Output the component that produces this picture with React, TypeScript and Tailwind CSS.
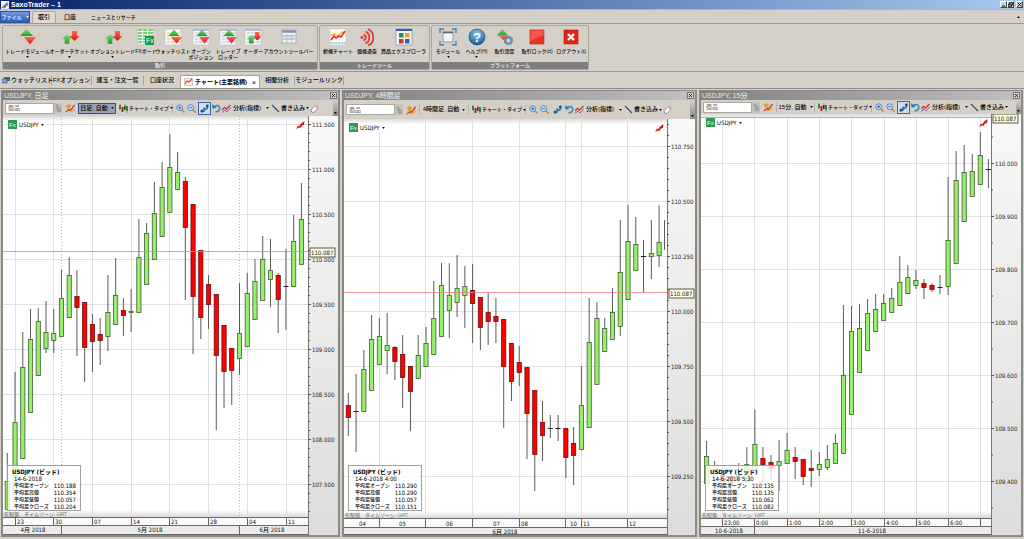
import React from "react";

type Candle = [high: number, top: number, bottom: number, low: number, kind: "up" | "down" | "flat"];

interface ChartData {
  id: string;
  title: string;
  interval: string;
  intervalActive?: boolean;
  linked?: boolean;
  eraser?: boolean;
  intervalWidth: string;
  toolbarHeight: string;
  date: string;
  legend: [string, string][];
  // plot geometry, in chart units
  left: number;
  top: number;
  width: number;
  axisX: number;
  baseY: number;
  rowY: number;
  priceY: number;
  gridX: number[];
  dotted: number[];
  majors: [number, string][];
  minorStep: number;
  ticks: [number, string][];
  periods: [number, string][];
  periodLines: number[];
  firstX: number;
  step: number;
  candles: Candle[];
}

const BOTTOM = 535;

const daily: ChartData = {
  id: "daily",
  title: "USDJPY, 日足",
  interval: "日足, 自動",
  intervalActive: true,
  linked: true,
  eraser: true,
  intervalWidth: "w-[38px]",
  toolbarHeight: "h-[16px]",
  date: "14-6-2018",
  legend: [
    ["平均足オープン", "110.188"],
    ["平均足高値", "110.354"],
    ["平均足低値", "110.057"],
    ["平均足クローズ", "110.204"],
  ],
  left: 3,
  top: 116,
  width: 335,
  axisX: 308,
  baseY: 517,
  rowY: 525,
  priceY: 251,
  gridX: [15, 53, 92, 131, 169, 208, 247, 286],
  dotted: [61, 239],
  majors: [
    [124, "111.500"],
    [169, "111.000"],
    [214, "110.500"],
    [259, "110.000"],
    [304, "109.500"],
    [349, "109.000"],
    [394, "108.500"],
    [439, "108.000"],
    [484, "107.500"],
  ],
  minorStep: 9,
  ticks: [
    [17, "23"],
    [55, "30"],
    [94, "07"],
    [133, "14"],
    [171, "21"],
    [210, "28"],
    [249, "04"],
    [288, "11"],
  ],
  periods: [
    [33, "4月 2018"],
    [150, "5月 2018"],
    [272, "6月 2018"],
  ],
  periodLines: [61, 239],
  firstX: 7.3,
  step: 7.74,
  candles: [
    [453, 481, 510, 510, "up"],
    [372, 422, 495, 495, "up"],
    [332, 367, 459, 459, "up"],
    [309, 339, 413, 413, "up"],
    [308, 321, 376, 376, "up"],
    [301, 332, 349, 353, "up"],
    [309, 333, 341, 353, "up"],
    [270, 298, 337, 337, "up"],
    [257, 275, 318, 318, "up"],
    [270, 296, 308, 356, "down"],
    [302, 302, 348, 382, "down"],
    [314, 324, 342, 372, "down"],
    [318, 334, 341, 365, "down"],
    [275, 312, 337, 351, "up"],
    [258, 295, 325, 325, "up"],
    [298, 310, 316, 336, "down"],
    [289, 311, 313, 332, "up"],
    [219, 257, 313, 313, "up"],
    [223, 233, 285, 285, "up"],
    [182, 213, 260, 260, "up"],
    [162, 187, 237, 237, "up"],
    [134, 167, 213, 213, "up"],
    [152, 172, 190, 190, "up"],
    [177, 181, 228, 300, "down"],
    [204, 204, 297, 354, "down"],
    [250, 250, 318, 339, "down"],
    [275, 284, 305, 329, "down"],
    [294, 294, 356, 430, "down"],
    [325, 325, 372, 408, "down"],
    [348, 348, 371, 405, "down"],
    [283, 333, 359, 375, "up"],
    [273, 293, 347, 347, "up"],
    [259, 281, 320, 320, "up"],
    [236, 259, 301, 301, "up"],
    [239, 270, 280, 307, "up"],
    [273, 275, 300, 333, "down"],
    [249, 286, 287, 330, "flat"],
    [215, 241, 287, 287, "up"],
    [183, 219, 265, 265, "up"],
  ],
};

const fourHour: ChartData = {
  id: "four-hour",
  title: "USDJPY, 4時間足",
  interval: "4時間足, 自動",
  eraser: true,
  intervalWidth: "w-[50px]",
  toolbarHeight: "h-[19px]",
  date: "14-6-2018 4:00",
  legend: [
    ["平均足オープン", "110.290"],
    ["平均足高値", "110.290"],
    ["平均足低値", "110.057"],
    ["平均足クローズ", "110.151"],
  ],
  left: 344,
  top: 119,
  width: 351,
  axisX: 667,
  baseY: 518,
  rowY: 527,
  priceY: 292,
  gridX: [379, 425, 472, 519, 565, 581, 627],
  dotted: [],
  majors: [
    [146, "110.750"],
    [201, "110.500"],
    [256, "110.250"],
    [311, "110.000"],
    [366, "109.750"],
    [421, "109.500"],
    [476, "109.250"],
  ],
  minorStep: 11,
  ticks: [
    [359, "04"],
    [399, "05"],
    [446, "06"],
    [493, "07"],
    [521, "08"],
    [570, "10"],
    [583, "11"],
    [629, "12"],
  ],
  periods: [[505, "6月 2018"]],
  periodLines: [],
  firstX: 348.3,
  step: 7.77,
  candles: [
    [393, 405, 418, 436, "down"],
    [374, 411, 412, 452, "flat"],
    [350, 369, 412, 412, "up"],
    [315, 339, 391, 391, "up"],
    [318, 336, 365, 365, "up"],
    [313, 345, 351, 374, "up"],
    [346, 347, 362, 380, "down"],
    [335, 354, 378, 408, "down"],
    [366, 366, 392, 431, "down"],
    [335, 355, 379, 379, "up"],
    [327, 343, 367, 367, "up"],
    [281, 318, 355, 355, "up"],
    [263, 285, 337, 337, "up"],
    [263, 295, 311, 338, "up"],
    [255, 288, 303, 317, "up"],
    [266, 286, 296, 328, "up"],
    [264, 290, 304, 343, "down"],
    [297, 297, 328, 350, "down"],
    [293, 312, 322, 345, "down"],
    [298, 316, 322, 343, "down"],
    [319, 319, 367, 428, "down"],
    [343, 343, 382, 401, "down"],
    [346, 362, 373, 386, "down"],
    [367, 367, 414, 459, "down"],
    [390, 390, 455, 491, "down"],
    [401, 422, 436, 461, "down"],
    [415, 428, 429, 438, "flat"],
    [415, 428, 429, 441, "flat"],
    [428, 428, 458, 478, "down"],
    [427, 443, 456, 485, "down"],
    [366, 405, 450, 450, "up"],
    [298, 342, 428, 428, "up"],
    [302, 318, 385, 385, "up"],
    [318, 328, 352, 352, "up"],
    [288, 312, 340, 340, "up"],
    [220, 272, 327, 336, "up"],
    [205, 241, 300, 300, "up"],
    [217, 244, 271, 271, "up"],
    [240, 256, 257, 292, "flat"],
    [220, 253, 257, 279, "up"],
    [205, 242, 256, 267, "up"],
  ],
};

const quarter: ChartData = {
  id: "quarter",
  title: "USDJPY, 15分",
  interval: "15分, 自動",
  linked: true,
  intervalWidth: "w-[39px]",
  toolbarHeight: "h-[14px]",
  date: "14-6-2018 5:30",
  legend: [
    ["平均足オープン", "110.135"],
    ["平均足高値", "110.135"],
    ["平均足低値", "110.062"],
    ["平均足クローズ", "110.082"],
  ],
  left: 701,
  top: 114,
  width: 320,
  axisX: 991,
  baseY: 518,
  rowY: 526,
  priceY: 117,
  gridX: [722, 754, 787, 819, 851, 884, 916, 948, 980],
  dotted: [],
  majors: [
    [163, "110.000"],
    [216, "109.900"],
    [269, "109.800"],
    [322, "109.700"],
    [375, "109.600"],
    [428, "109.500"],
    [481, "109.400"],
  ],
  minorStep: 26.5,
  ticks: [
    [724, "23:00"],
    [756, "0:00"],
    [789, "1:00"],
    [821, "2:00"],
    [853, "3:00"],
    [886, "4:00"],
    [918, "5:00"],
    [950, "6:00"],
  ],
  periods: [
    [729, "10-6-2018"],
    [872, "11-6-2018"],
  ],
  periodLines: [754],
  firstX: 706.6,
  step: 8.05,
  candles: [
    [441, 456, 484, 484, "up"],
    [461, 480, 481, 494, "flat"],
    [466, 473, 482, 494, "down"],
    [470, 476, 487, 494, "down"],
    [463, 475, 480, 490, "up"],
    [447, 464, 482, 484, "up"],
    [410, 444, 472, 472, "up"],
    [447, 458, 465, 486, "down"],
    [455, 462, 469, 480, "down"],
    [440, 461, 466, 491, "up"],
    [433, 450, 464, 464, "up"],
    [447, 457, 462, 479, "down"],
    [459, 459, 477, 485, "down"],
    [450, 468, 471, 487, "down"],
    [452, 464, 470, 476, "up"],
    [445, 459, 468, 470, "up"],
    [434, 443, 464, 464, "up"],
    [305, 375, 454, 454, "up"],
    [306, 331, 415, 415, "up"],
    [304, 328, 373, 373, "up"],
    [299, 313, 351, 351, "up"],
    [294, 309, 332, 332, "up"],
    [294, 303, 321, 321, "up"],
    [288, 298, 313, 313, "up"],
    [256, 282, 306, 306, "up"],
    [265, 277, 294, 294, "up"],
    [270, 280, 286, 289, "up"],
    [279, 283, 288, 299, "down"],
    [283, 285, 290, 292, "down"],
    [275, 287, 288, 294, "flat"],
    [177, 240, 287, 295, "up"],
    [151, 180, 264, 264, "up"],
    [145, 172, 222, 222, "up"],
    [154, 171, 197, 197, "up"],
    [132, 155, 185, 185, "up"],
    [159, 169, 170, 188, "flat"],
  ],
};

function Caret({ className = "" }: { className?: string }) {
  return (
    <svg viewBox="0 0 4 3" className={`w-[3px] h-[2px] shrink-0 ${className}`}>
      <path d="M0 0h4L2 3z" fill="currentColor" />
    </svg>
  );
}

const UP = "M5 0l5 5H7.500v5h-5V5H0z";
const DOWN = "M5 10L0 5h2.500V0h5v5H10z";

function RibbonIcon({ name }: { name: string }) {
  return (
    <svg viewBox="0 0 18 18" className="w-[18px] h-[18px] shrink-0">
      <defs>
        <linearGradient id={`g-${name}`} x1="0" y1="0" x2="0" y2="1">
          <stop offset="0" stopColor="#7fdc76" />
          <stop offset="1" stopColor="#1f9c2a" />
        </linearGradient>
        <linearGradient id={`r-${name}`} x1="0" y1="0" x2="0" y2="1">
          <stop offset="0" stopColor="#fb6a55" />
          <stop offset="1" stopColor="#d9150f" />
        </linearGradient>
        <radialGradient id={`b-${name}`} cx="0.5" cy="0.3" r="0.7">
          <stop offset="0" stopColor="#8fcdf0" />
          <stop offset="1" stopColor="#175b94" />
        </radialGradient>
      </defs>
      {name === "trade" && (
        <>
          <path d="M7.500 1l6.500 7H1z" fill={`url(#g-${name})`} />
          <path d="M5 9h12l-6 7.500z" fill={`url(#r-${name})`} />
        </>
      )}
      {name === "ticket" && (
        <>
          <path d={DOWN} transform="translate(8.500 3)" fill={`url(#r-${name})`} />
          <path d={UP} transform="translate(1 6)" fill={`url(#g-${name})`} stroke="#d4d0c8" strokeWidth=".4" />
        </>
      )}
      {name === "fx" && (
        <>
          <rect x="1" y="1" width="15" height="15" fill="#eafbe8" />
          {[2, 5, 8, 11, 14].map((y) => (
            <path key={y} d={`M1 ${y}h4M6 ${y}h4M11 ${y}h5`} stroke="#57c552" strokeWidth="1.500" />
          ))}
          <rect x="8" y="8" width="9" height="9" rx="1" fill="#129a43" />
          <text x="9" y="15" fontSize="7" fontFamily="Liberation Sans" fill="#fff">Fx</text>
        </>
      )}
      {(name === "watch" || name === "position" || name === "blotter" || name === "order") && (
        <>
          <rect x="1" y="1" width="16" height="16" fill="#f6f6f8" stroke="#b9bdc6" strokeWidth=".6" />
          {name !== "watch" && <path d="M1 2h16" stroke="#9fb0cf" strokeWidth="1.500" />}
          {[5, 8, 11, 14].map((y) => (
            <path key={y} d={`M3 ${y}h3M7 ${y}h4M12 ${y}h4`} stroke={name === "watch" ? "#f3c53d" : "#b4b8c2"} strokeWidth="1" />
          ))}
          {name === "order" ? (
            <>
              <path d={DOWN} transform="translate(9 4) scale(.85)" fill={`url(#r-${name})`} />
              <path d={UP} transform="translate(3 7) scale(.85)" fill={`url(#g-${name})`} />
            </>
          ) : (
            <>
              <path d="M10 1.500l5.500 6.500h-11z" fill={`url(#g-${name})`} />
              <path d="M7 9h11l-5.500 6.500z" fill={`url(#r-${name})`} />
            </>
          )}
        </>
      )}
      {name === "account" && (
        <>
          <rect x="2" y="2" width="14" height="13" fill="#eef0f4" stroke="#a3a9b5" strokeWidth=".8" />
          <path d="M2 3.500h14" stroke="#8193b3" strokeWidth="2.500" />
          <path d="M3 8h12M3 11h12" stroke="#b7bfcc" strokeWidth="1.500" />
          <path d="M7 6v9M11.500 6v9" stroke="#b7bfcc" strokeWidth=".8" />
        </>
      )}
      {name === "chart" && (
        <>
          <rect x="1" y="1" width="16" height="16" fill="#fbfbfc" stroke="#c7c9ce" strokeWidth=".6" />
          <path d="M1 15h16" stroke="#b9c4d9" strokeWidth="2" strokeDasharray="2 .7" />
          <path d="M2 7l4-1 3 2 4-4 3 1" fill="none" stroke="#f4b12b" strokeWidth="1.300" />
          <path d="M2 12l3-4 2 2 3-2 2 1 4-6" fill="none" stroke="#e2301c" strokeWidth="1.700" />
        </>
      )}
      {name === "alert" && (
        <g fill="none" stroke="#e2392b" strokeWidth="1.800">
          <circle cx="4" cy="9.500" r="1.400" fill="#e2392b" stroke="none" />
          <path d="M5.500 6.500c3 1 3 5 0 6M7.500 3.500c5 2 5 10 0 12M10 1c7 3 7 14 0 16.500" />
        </g>
      )}
      {name === "explorer" && (
        <>
          <rect x="1" y="1" width="16" height="16" fill="#f4f4f6" stroke="#8c97ad" strokeWidth=".8" />
          <path d="M1 2h16" stroke="#3a5ca0" strokeWidth="2" />
          <path d="M4 5h4.500v4.500H4z" fill="#1f9a3e" />
          <path d="M10 5h4.500v4.500H10z" fill="#f0a020" />
          <path d="M4 11h4.500v4.500H4z" fill="#d2372b" />
          <path d="M10 11h4.500v4.500H10z" fill="#3a5ca0" />
        </>
      )}
      {name === "module" && (
        <>
          <rect x="4" y="4" width="10" height="10" fill="#f2f3f5" stroke="#7e8897" strokeWidth=".8" />
          <path d="M4 4.500h10" stroke="#55657f" strokeWidth="1.500" />
          <path d="M1 5V1h4M13 1h4v4M17 13v4h-4M5 17H1v-4" fill="none" stroke="#3b86b9" strokeWidth="1.400" />
        </>
      )}
      {name === "help" && (
        <>
          <circle cx="9" cy="9" r="8" fill={`url(#b-${name})`} stroke="#17476f" strokeWidth=".6" />
          <text x="9" y="14" fontSize="13" fontWeight="700" textAnchor="middle" fontFamily="Liberation Sans" fill="#fff">?</text>
        </>
      )}
      {name === "settings" && (
        <>
          <path d="M6.500 1l5.500 6.500H1z" fill={`url(#g-${name})`} />
          <path d="M3 8h10l-3.500 6z" fill={`url(#r-${name})`} />
          <circle cx="12.500" cy="12.500" r="3" fill="#c9d6e2" stroke="#6d8aa5" strokeWidth="2" />
          <circle cx="12.500" cy="12.500" r="4.300" fill="none" stroke="#6d8aa5" strokeWidth="1.200" strokeDasharray="1.700 1.700" />
        </>
      )}
      {name === "lock" && (
        <>
          <rect x="2" y="2" width="14" height="14" fill="#ee3124" stroke="#b81b12" strokeWidth=".6" />
          <path d="M2.500 2.500h13v5c-5 1-8 2-13 6z" fill="#f4594d" />
        </>
      )}
      {name === "logout" && (
        <>
          <rect x="2" y="2" width="14" height="14" fill="#e0261b" stroke="#b81b12" strokeWidth=".6" />
          <path d="M6 6l6 6M12 6l-6 6" stroke="#fff" strokeWidth="2.200" />
        </>
      )}
    </svg>
  );
}

interface RibbonItem {
  icon: string;
  label: string;
  second?: string;
  menu?: boolean;
  width: string;
}

const ribbon: { name: string; items: RibbonItem[] }[] = [
  {
    name: "取引",
    items: [
      { icon: "trade", label: "トレードモジュール", menu: true, width: "w-[41px]" },
      { icon: "ticket", label: "オーダーチケット", menu: true, width: "w-[43px]" },
      { icon: "ticket", label: "オプショントレード", menu: true, width: "w-[43px]" },
      { icon: "fx", label: "FXボード", width: "w-[24px]" },
      { icon: "watch", label: "ウォッチリスト", width: "w-[30px]" },
      { icon: "position", label: "オープン", second: "ポジション", width: "w-[26px]" },
      { icon: "blotter", label: "トレードブ", second: "ロッター", width: "w-[28px]" },
      { icon: "order", label: "オーダー", width: "w-[22px]" },
      { icon: "account", label: "アカウントツールバー", width: "w-[49px]" },
    ],
  },
  {
    name: "トレードツール",
    items: [
      { icon: "chart", label: "新規チャート", width: "w-[28px]" },
      { icon: "alert", label: "価格通告", width: "w-[30px]" },
      { icon: "explorer", label: "商品エクスプローラ", width: "w-[43px]" },
    ],
  },
  {
    name: "プラットフォーム",
    items: [
      { icon: "module", label: "モジュール", menu: true, width: "w-[24px]" },
      { icon: "help", label: "ヘルプ(H)", menu: true, width: "w-[33px]" },
      { icon: "settings", label: "取引設定", width: "w-[23px]" },
      { icon: "lock", label: "取引ロック(d)", width: "w-[42px]" },
      { icon: "logout", label: "ログアウト(t)", width: "w-[26px]" },
    ],
  },
];

function Ribbon() {
  return (
    <div className="flex gap-px px-0.5 py-px border-t border-b border-[#9c9991]">
      {ribbon.map((group) => (
        <section key={group.name} className="flex flex-col border border-[#a9a69e] rounded-xs">
          <div className="flex h-[36px] px-1 pt-0.5">
            {group.items.map((item) => (
              <button key={item.label} type="button" className={`flex flex-col items-center whitespace-nowrap text-[5px] leading-[6px] ${item.width}`}>
                <RibbonIcon name={item.icon} />
                <span className="pt-0.5">{item.label}</span>
                {item.second && <span>{item.second}</span>}
                {item.menu && <Caret className="mt-0.5" />}
              </button>
            ))}
          </div>
          <h2 className="h-[7px] bg-[#7f7f7f] text-white text-center text-[5px] leading-[7px]">{group.name}</h2>
        </section>
      ))}
    </div>
  );
}

function ModuleTabs() {
  const tab = "flex items-center justify-center whitespace-nowrap border-r border-[#a5a299] h-[9px] text-[6px]";
  return (
    <nav className="flex items-center h-[16px]">
      <a href="#watch" className={`${tab} w-[52px] gap-px pl-1 text-[5px]`}>
        <svg viewBox="0 0 8 8" className="w-[8px] h-[8px] shrink-0">
          <rect x="2" y="1" width="6" height="4" fill="#44648e" />
          <rect x="0" y="3" width="5" height="4" fill="#7fa3cc" stroke="#2c4c77" strokeWidth=".6" />
        </svg>
        ウォッチリスト
      </a>
      <a href="#fxoption" className={`${tab} w-[40px] text-[5px]`}>FXオプション</a>
      <a href="#positions" className={`${tab} w-[52px]`}>建玉・注文一覧</a>
      <a href="#account" className={`${tab} w-[36px] border-r-0`}>口座状況</a>
      <div className="flex items-center gap-0.5 self-end w-[80px] h-[13px] px-[3px] bg-white border border-b-0 border-[#a5a299] rounded-t-xs text-[6px] font-bold whitespace-nowrap">
        <svg viewBox="0 0 9 8" className="w-[9px] h-[8px] shrink-0">
          <rect x=".5" y=".5" width="8" height="7" fill="#f6f2ee" stroke="#b0b0b0" strokeWidth=".6" />
          <path d="M1 6l2-3 2 1 3-3" fill="none" stroke="#e2391f" strokeWidth="1.200" />
        </svg>
        <a href="#chart">チャート(主要銘柄)</a>
        <button type="button" aria-label="閉じる" className="ml-auto font-normal text-[7px] leading-none">×</button>
      </div>
      <a href="#correlation" className={`${tab} w-[35px]`}>相関分析</a>
      <a href="#modulelink" className={`${tab} w-[49px] text-[5px]`}>モジュールリンク</a>
    </nav>
  );
}

function Zoom({ minus = false }: { minus?: boolean }) {
  return (
    <button type="button" aria-label={minus ? "縮小" : "拡大"}>
      <svg viewBox="0 0 9 9" className="w-[9px] h-[9px]">
        <path d="M5.500 5.500L8.500 8.500" stroke="#c9873f" strokeWidth="1.600" />
        <circle cx="3.700" cy="3.700" r="2.900" fill="#d7e9fb" stroke="#4a80c8" strokeWidth="1" />
        <path d={minus ? "M2.200 3.700h3" : "M2.200 3.700h3M3.700 2.200v3"} stroke="#1d53a8" strokeWidth=".9" />
      </svg>
    </button>
  );
}

function Toolbar({ chart }: { chart: ChartData }) {
  return (
    <div className={`flex items-center pl-0.5 bg-[#d4d0c8] text-[6px] whitespace-nowrap overflow-hidden ${chart.toolbarHeight}`}>
      <input
        type="text"
        aria-label="商品"
        placeholder="商品"
        className="w-[49px] h-[11px] pl-0.5 shrink-0 bg-white border border-[#aaa79f] placeholder:text-[#7a7a7a] outline-none"
      />
      <button type="button" aria-label="商品リスト" className="shrink-0 h-[11px] w-[8px] bg-[#c6c3bb] flex items-center justify-center">
        <svg viewBox="0 0 6 8" className="w-[6px] h-[8px]">
          <path d="M1 1h2v2H1zM3.500 3.500h2v2h-2zM3.500 6.200h2v1.500h-2zM2 3v4h1.500M2 4.500h1.500" fill="none" stroke="#8c8c8c" strokeWidth=".7" />
        </svg>
      </button>
      <button type="button" aria-label="お気に入り" className="shrink-0 ml-[3px] mr-[3px]">
        <svg viewBox="0 0 10 10" className="w-[10px] h-[10px]">
          <path d="M3.500 0l1 2.300 2.500.2-2 1.600.6 2.400-2.100-1.300L1.400 6.500 2 4.100 0 2.500l2.500-.2z" fill="#e79a1c" />
          <path d="M1 9l3-2.500 1.500 1L9.500 2" fill="none" stroke="#c83c24" strokeWidth="1.300" />
          <path d="M4 9.300l2-1.600 1.500.7 2-2.400" fill="none" stroke="#d89a2a" strokeWidth="1" />
        </svg>
      </button>
      <button
        type="button"
        className={`flex items-center justify-center gap-[3px] shrink-0 h-[11px] border ${chart.intervalWidth} ${
          chart.intervalActive ? "bg-[#98a1ba] border-[#3b4f86]" : "border-y-transparent border-x-[#b5b2a9]"
        }`}
      >
        {chart.interval}
        <Caret />
      </button>
      <button type="button" className="flex items-center gap-px shrink-0 w-[57px] pl-[3px] border-r border-[#b5b2a9] text-[5px]">
        <svg viewBox="0 0 9 9" className="w-[9px] h-[9px] shrink-0">
          <path d="M1 0v6M8 2v7M6 0v6" stroke="#444" strokeWidth=".5" />
          <path d="M0 1h2v4H0zM7 2h2v5H7z" fill="#2c8a34" />
          <path d="M2.500 3h2v5h-2z" fill="#a8231b" />
          <path d="M5 2h1.500v4H5z" fill="#413030" />
        </svg>
        チャート・タイプ
        <Caret />
      </button>
      <div className="flex items-center shrink-0 gap-0.5 pl-[3px]">
        <Zoom />
        <Zoom minus />
        <button type="button" aria-label="リンク" className={`p-px border ${chart.linked ? "border-[#3f66a8] bg-[#d3dcea]" : "border-transparent"}`}>
          <svg viewBox="0 0 9 9" className="w-[9px] h-[9px]">
            <path d="M1 7.500C4 8 5 6.500 4.500 4.500M5 5.500C8 5 8 3 7 1.500" fill="none" stroke="#2d6ea6" strokeWidth="1.500" />
            <circle cx="2" cy="7" r="1.500" fill="#1c4f80" />
            <circle cx="4.500" cy="4.800" r="1.500" fill="#3579b3" />
            <circle cx="7.300" cy="2" r="1.400" fill="#1c4f80" />
          </svg>
        </button>
        <button type="button" aria-label="元に戻す" className="-ml-px">
          <svg viewBox="0 0 9 9" className="w-[9px] h-[9px]">
            <path d="M2 2.500C6 0 8.500 3 7.500 5.500 7 7.500 5 8 3.500 7.500" fill="none" stroke="#3a8fc0" strokeWidth="1.700" />
            <path d="M0 0l.5 4.500L4.500 4z" fill="#2b77ab" />
          </svg>
        </button>
      </div>
      <button type="button" className="flex items-center gap-0.5 shrink-0 pl-px w-[50px]">
        <svg viewBox="0 0 9 9" className="w-[9px] h-[9px] shrink-0">
          <path d="M0 6l2.500-2.500L4.500 5 8.500 1" fill="none" stroke="#d13a2c" strokeWidth="1.400" />
          <path d="M0 8.500L3 6l2 2 4-4.500" fill="none" stroke="#8d5aa0" strokeWidth="1" />
        </svg>
        分析(指標)
        <Caret className="ml-[3px]" />
      </button>
      <button type="button" className="flex items-center gap-px shrink-0 w-[39px]">
        <svg viewBox="0 0 9 9" className="w-[9px] h-[9px] shrink-0">
          <path d="M1 1l7 7" stroke="#3b4d78" strokeWidth="1.200" />
        </svg>
        書き込み
        <Caret />
      </button>
      {chart.eraser && (
        <button type="button" aria-label="消去" className="shrink-0">
          <svg viewBox="0 0 9 9" className="w-[9px] h-[9px]">
            <path d="M1 6l4-4.500L8 2.500 7.500 5 4 8.500 1.500 8z" fill="#fbfbfb" stroke="#8a6f93" strokeWidth=".8" />
            <path d="M6 1.500l2 1-.5 2.500-2-1z" fill="#e7a1a0" />
          </svg>
        </button>
      )}
      <button type="button" aria-label="その他" className="ml-auto flex items-end justify-center self-stretch w-[5px] pb-0.5 shrink-0 bg-linear-to-b from-[#d4d0c8] to-[#8b8983]">
        <Caret />
      </button>
    </div>
  );
}

function Plot({ chart }: { chart: ChartData }) {
  const { left, top, width, axisX, baseY, rowY, priceY } = chart;
  const right = left + width;
  const start = chart.majors[0][0];
  const minors: number[] = [];
  for (let y = start - chart.minorStep * 5; y < baseY; y += chart.minorStep) {
    if (y > top) minors.push(y);
  }
  const clip = `plot-${chart.id}`;

  return (
    <svg viewBox={`${left} ${top} ${width} ${BOTTOM - top}`} className="block w-full h-auto font-['DejaVu_Sans_Condensed','Noto_Sans_CJK_JP',sans-serif]" fontSize="6">
      <defs>
        <linearGradient id={`axis-${chart.id}`} x1="0" y1="0" x2="0" y2="1">
          <stop offset="0" stopColor="#f8f8f8" />
          <stop offset="1" stopColor="#dcdcdc" />
        </linearGradient>
        <linearGradient id={`shade-${chart.id}`} x1="0" y1="0" x2="0" y2="1">
          <stop offset="0" stopColor="#dadada" />
          <stop offset="1" stopColor="#fff" />
        </linearGradient>
        <linearGradient id={`foot-${chart.id}`} x1="0" y1="0" x2="0" y2="1">
          <stop offset="0" stopColor="#fff" />
          <stop offset="1" stopColor="#dadada" />
        </linearGradient>
        <clipPath id={clip}>
          <rect x={left} y={top} width={axisX - left} height={baseY - top} />
        </clipPath>
      </defs>

      <rect x={left} y={top} width={width} height={BOTTOM - top} fill="#fff" />
      <rect x={left} y={top} width={axisX - left} height="5" fill={`url(#shade-${chart.id})`} />
      <rect x={left} y={baseY - 7} width={axisX - left} height="7" fill={`url(#foot-${chart.id})`} />

      <g stroke="#e0e0e0" strokeWidth="1">
        {chart.gridX.map((x) => (
          <path key={x} d={`M${x + 0.5} ${top}V${baseY}`} />
        ))}
        {chart.majors.map(([y]) => (
          <path key={y} d={`M${left} ${y + 0.5}H${axisX}`} />
        ))}
      </g>
      {chart.dotted.map((x) => (
        <path key={x} d={`M${x + 0.5} ${top}V${baseY}`} stroke="#b4b4b4" strokeDasharray="1 2" />
      ))}

      <g clipPath={`url(#${clip})`}>
        {chart.candles.map(([high, bodyTop, bodyBottom, low, kind], i) => {
          const x = chart.firstX + i * chart.step;
          return (
            <g key={i}>
              <path d={`M${x} ${high}V${low}`} stroke="#5a5a5a" strokeWidth="1" />
              {kind === "flat" ? (
                <path d={`M${x - 2.5} ${bodyTop + 0.5}h5`} stroke="#222" />
              ) : (
                <rect
                  x={x - 2.1}
                  y={bodyTop + 0.5}
                  width="4.200"
                  height={Math.max(bodyBottom - bodyTop - 1, 1)}
                  fill={kind === "up" ? "#98ec6e" : "#fe0000"}
                  stroke={kind === "up" ? "#3d6130" : "#6b0d0d"}
                  strokeWidth=".8"
                />
              )}
            </g>
          );
        })}
      </g>
      {chart.id === "four-hour" && <path d="M664.500 220v30" stroke="#5a5a5a" />}
      <path d={`M${left} ${priceY + 0.5}H${axisX}`} stroke="#f47c7c" strokeWidth=".8" />

      <path
        d="M0 8L2 4.500 3.500 5 5 2.500 8.500 0 8 4 6 4.500 4.500 7 3 6.500z"
        transform={`translate(${axisX - 12} ${top + 5})`}
        fill="#dc1c12"
      />

      <rect x={axisX} y={top} width={right - axisX} height={BOTTOM - top} fill={`url(#axis-${chart.id})`} />
      <g stroke="#555" strokeWidth="1">
        <path d={`M${axisX + 0.5} ${top}V${BOTTOM}`} stroke="#777" />
        {minors.map((y) => (
          <path key={y} d={`M${axisX} ${y + 0.5}h2`} />
        ))}
        {chart.majors.map(([y]) => (
          <path key={y} d={`M${axisX} ${y + 0.5}h3`} />
        ))}
      </g>
      <g fill="#222">
        {chart.majors.map(([y, label]) => (
          <text key={label} x={axisX + 4} y={y + 3}>{label}</text>
        ))}
      </g>

      <rect x={axisX + 2} y={priceY - 3} width="25" height="9" fill="#fdfcdf" stroke="#5b5b4a" />
      <text x={axisX + 3} y={priceY + 4} fill="#222">110.087</text>

      <text x={left + 1} y={baseY - 1} fontSize="5" fill="#7a7a7a">気配値　タイムゾーン: GMT</text>
      <rect x={left} y={baseY} width={axisX - left} height={rowY - baseY} fill="#fafafa" />
      <rect x={left} y={rowY} width={axisX - left} height={BOTTOM - rowY} fill="#ececec" />
      <g stroke="#666">
        <path d={`M${left} ${baseY + 0.5}H${axisX}M${left} ${rowY + 0.5}H${axisX}M${left} ${BOTTOM - 0.5}H${axisX}`} />
        {chart.gridX.map((x) => (
          <path key={x} d={`M${x + 0.5} ${baseY}V${rowY}`} />
        ))}
        {chart.periodLines.map((x) => (
          <path key={x} d={`M${x + 0.5} ${rowY}V${BOTTOM}`} />
        ))}
      </g>
      <g fill="#111">
        {chart.ticks.map(([x, label]) => (
          <text key={label} x={x} y={rowY - 1}>{label}</text>
        ))}
        {chart.periods.map(([x, label]) => (
          <text key={label} x={x} y={rowY + 7} textAnchor="middle">{label}</text>
        ))}
      </g>
    </svg>
  );
}

function ChartWindow({ chart }: { chart: ChartData }) {
  return (
    <section className="min-w-0 self-start border-x-2 border-t border-b-2 border-[#8b8984]">
      <header className="flex items-center justify-between h-[9px] px-px bg-linear-to-r from-[#808080] to-[#c0c0c0]">
        <h2 className="text-[7px] leading-[9px] text-[#ece9e2]">{chart.title}</h2>
        <button type="button" aria-label="閉じる" className="flex items-center justify-center w-[7px] h-[7px] bg-[#d4d0c8] border border-[#777]">
          <svg viewBox="0 0 5 5" className="w-[5px] h-[5px]">
            <path d="M1 1l3 3M4 1L1 4" stroke="#111" strokeWidth=".9" />
          </svg>
        </button>
      </header>
      <Toolbar chart={chart} />
      <div className="relative">
        <Plot chart={chart} />
        <button type="button" className="absolute left-[5px] top-1 flex items-center gap-0.5 pr-0.5 bg-white text-[6px] leading-[9px] font-['DejaVu_Sans_Condensed',sans-serif]">
          <svg viewBox="0 0 9 9" className="w-[9px] h-[9px]">
            <rect width="9" height="9" rx=".5" fill="#2a9a4c" />
            <text x="1" y="7" fontSize="6" fontFamily="Liberation Sans" fill="#fff">Fx</text>
          </svg>
          USDJPY
          <Caret />
        </button>
        <div className="absolute left-1 bottom-6 w-[74px] h-[46px] pt-0.5 px-1 bg-white/80 border border-[#a0a0a0] text-[6px] leading-[7px] whitespace-nowrap text-black font-['DejaVu_Sans_Condensed','Noto_Sans_CJK_JP',sans-serif]">
          <h3 className="font-bold">USDJPY (ビッド)</h3>
          <p className="pl-0.5">{chart.date}</p>
          <dl className="pl-0.5">
            {chart.legend.map(([name, value]) => (
              <div key={name} className="flex justify-between">
                <dt className="text-[5px]">{name}</dt>
                <dd>{value}</dd>
              </div>
            ))}
          </dl>
        </div>
      </div>
    </section>
  );
}

export default function App() {
  const control = "flex items-center justify-center w-[7px] h-[7px] bg-[#d4d0c8] border border-white border-r-[#444] border-b-[#444]";
  return (
    <div className="flex flex-col min-h-screen bg-[#d4d0c8] text-black font-medium text-[6px] leading-[7px] font-['Liberation_Sans','Noto_Sans_CJK_JP',sans-serif]">
      <header className="flex items-center h-[10px] px-px gap-0.5 bg-linear-to-r from-[#0a246a] to-[#a6caf0] border-b border-[#b8b5ad]">
        <svg viewBox="0 0 8 8" className="w-[8px] h-[8px]">
          <rect width="8" height="8" fill="#f4f6fa" />
          <path d="M1 7L6.500 1.500M3 7L7 3" stroke="#5577a8" strokeWidth="1.200" />
        </svg>
        <h1 className="text-[7px] leading-[9px] font-bold text-white">SaxoTrader – 1</h1>
        <div className="ml-auto flex">
          <button type="button" aria-label="最小化" className={control}>
            <svg viewBox="0 0 5 5" className="w-[5px] h-[5px]"><path d="M1 4h3" stroke="#000" /></svg>
          </button>
          <button type="button" aria-label="元のサイズ" className={control}>
            <svg viewBox="0 0 5 5" className="w-[5px] h-[5px]"><path d="M1.500.5h3v2.500h-3zM.5 2h3v2.500h-3z" fill="none" stroke="#000" strokeWidth=".7" /></svg>
          </button>
          <button type="button" aria-label="閉じる" className={`${control} ml-0.5`}>
            <svg viewBox="0 0 5 5" className="w-[5px] h-[5px]"><path d="M.5.5l4 4M4.500.5l-4 4" stroke="#000" strokeWidth=".9" /></svg>
          </button>
        </div>
      </header>

      <nav className="flex items-end h-[13px] whitespace-nowrap">
        <button type="button" className="flex items-center justify-center gap-1 w-[30px] h-[12px] text-[5px] text-white bg-linear-to-b from-[#6f9be0] to-[#2a5bb8] border border-[#2b529b]">
          ファイル
          <Caret />
        </button>
        <a href="#trade" className="flex items-center justify-center w-[24px] h-[12px] ml-0.5 border border-b-0 border-[#a9a69e] rounded-t-xs bg-[#dedbd4]">取引</a>
        <a href="#accounts" className="flex items-center justify-center w-[28px] h-[12px]">口座</a>
        <a href="#news" className="flex items-center h-[12px] ml-[7px] text-[5px]">ニュースとリサーチ</a>
        <button type="button" aria-label="リボンを折りたたむ" className="ml-auto mr-[4px] mb-[5px]">
          <Caret className="rotate-180" />
        </button>
      </nav>

      <Ribbon />
      <ModuleTabs />

      <main className="grow grid grid-cols-[339fr_355fr_324fr] gap-0.5 px-px pt-px pb-0.5 border-t border-[#8f8c85]">
        <ChartWindow chart={daily} />
        <ChartWindow chart={fourHour} />
        <ChartWindow chart={quarter} />
      </main>
    </div>
  );
}
